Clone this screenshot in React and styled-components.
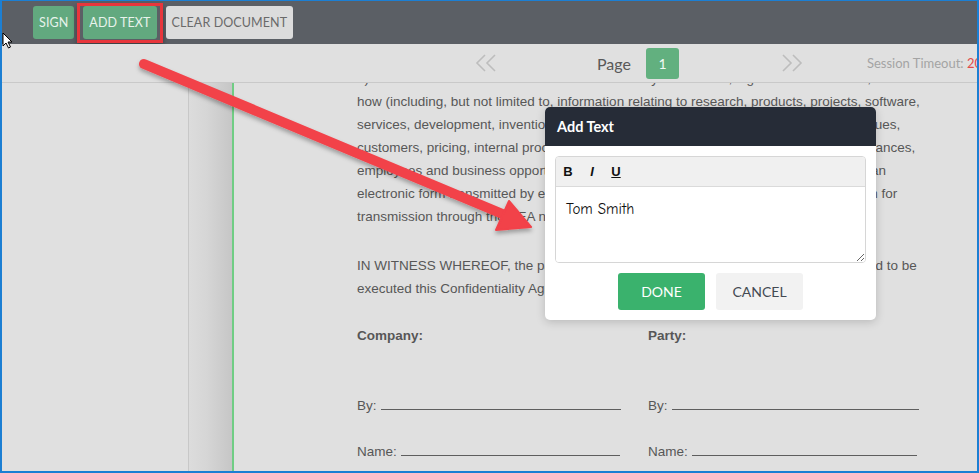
import styled, { createGlobalStyle } from "styled-components";

const GlobalStyle = createGlobalStyle`
  html, body {
    margin: 0;
    padding: 0;
    overflow: hidden;
    background: #ffffff;
  }
  * {
    box-sizing: border-box;
  }
`;

const Frame = styled.div`
  position: relative;
  width: 979px;
  height: 473px;
  overflow: hidden;
  display: flex;
  flex-direction: column;
  border: 2px solid #1c7fd3;
  border-top-width: 1px;
  background: #e0e0e0;
  font-family: Lato, "Open Sans", sans-serif;
`;

const Toolbar = styled.div`
  height: 43px;
  flex: none;
  display: flex;
  align-items: center;
  padding-left: 31px;
  background: #5b5f65;
`;

const ToolButton = styled.button`
  height: 33px;
  padding: 0 6px;
  border: none;
  border-radius: 3px;
  font-family: Lato, sans-serif;
  font-size: 12.5px;
  letter-spacing: 0.1px;
  text-transform: uppercase;
  background: ${(p) => (p.$light ? "#dcdcdc" : "#62a97f")};
  color: ${(p) => (p.$light ? "#6a6a6a" : "#e8f3ec")};
`;

const Highlight = styled.span`
  display: flex;
  margin: 1px 3px 0 3px;
  padding: 0 3px 1px;
  border: 3px solid #e8363c;
  box-shadow: 0 4px 6px rgba(0, 0, 0, 0.35);
`;

const NavBar = styled.div`
  height: 39px;
  flex: none;
  display: flex;
  align-items: center;
  border-bottom: 1px solid #c9c9c9;
  background: #e0e0e0;
  white-space: nowrap;
`;

const Chevrons = styled.svg`
  flex: none;
  margin-left: ${(p) => p.$offset}px;
`;

const PageLabel = styled.span`
  flex: none;
  margin-left: 100px;
  font-size: 16px;
  color: #595959;
`;

const PageBox = styled.span`
  flex: none;
  margin-left: 15px;
  width: 33px;
  height: 31px;
  border-radius: 3px;
  background: #62b07f;
  color: #f2faf5;
  font-size: 14px;
  display: flex;
  align-items: center;
  justify-content: center;
`;

const Timeout = styled.span`
  flex: none;
  margin-left: 64px;
  font-size: 13px;
  color: #a4a4a4;
`;

const TimeLeft = styled.span`
  color: #e24b4b;
`;

const Content = styled.div`
  flex: 1;
  min-height: 0;
  display: flex;
`;

const Sidebar = styled.div`
  width: 187px;
  flex: none;
  border-right: 1px solid #c8c8c8;
  background: #e0e0e0;
`;

const Gutter = styled.div`
  width: 45px;
  flex: none;
  background: linear-gradient(to right, #dcdcdc, #d6d6d6 40%, #c6c6c6);
  border-right: 2px solid #70cd84;
`;

const Sheet = styled.div`
  flex: 1;
  overflow: hidden;
  padding-left: 123px;
  background: #e0e0e0;
  font-family: "Liberation Sans", Arial, sans-serif;
  font-size: 13.5px;
  line-height: 23px;
  color: #575757;
`;

const Scroll = styled.div`
  margin-top: -16px;
`;

const Para = styled.p`
  margin: 0 0 ${(p) => p.$after}px;
  white-space: nowrap;
`;

const Line = styled.span`
  display: block;
`;

const SignGrid = styled.div`
  display: grid;
  grid-template-columns: 291px 290px;
  row-gap: ${(p) => p.$gap}px;
  margin-bottom: ${(p) => p.$after}px;
`;

const Heading = styled.span`
  font-weight: bold;
`;

const Field = styled.span`
  display: flex;
  align-items: baseline;
  gap: 4px;
`;

const Blank = styled.span`
  display: inline-block;
  width: ${(p) => p.$w}px;
  height: 11px;
  border-bottom: 1px solid #5e5e5e;
`;

const Modal = styled.div`
  position: absolute;
  left: 543px;
  top: 106px;
  width: 331px;
  border-radius: 5px;
  background: #ffffff;
  box-shadow: 0 2px 10px rgba(0, 0, 0, 0.18);
  overflow: hidden;
`;

const ModalHeader = styled.div`
  height: 39px;
  display: flex;
  align-items: center;
  padding-left: 12px;
  background: #262c37;
  color: #ffffff;
  font-weight: bold;
  font-size: 14.5px;
`;

const ModalBody = styled.div`
  padding: 10px 10px 10px;
`;

const Editor = styled.div`
  border: 1px solid #d6d6d6;
  border-radius: 4px;
  overflow: hidden;
`;

const EditorTools = styled.div`
  height: 30px;
  display: flex;
  align-items: center;
  gap: 12px;
  padding-left: 6px;
  background: #f0f0f0;
  border-bottom: 1px solid #dadada;
`;

const ToolGlyph = styled.span`
  width: 12px;
  text-align: center;
  font-family: "Liberation Sans", Arial, sans-serif;
  font-size: 13px;
  font-weight: bold;
  font-style: ${(p) => (p.$italic ? "italic" : "normal")};
  text-decoration: ${(p) => (p.$under ? "underline" : "none")};
  color: #111111;
`;

const TextBox = styled.textarea`
  display: block;
  width: 100%;
  height: 75px;
  margin: 0;
  padding: 13px 10px 8px;
  border: none;
  outline: none;
  resize: vertical;
  font-family: "Comic Sans MS", "Comic Neue", cursive;
  font-size: 15px;
  color: #111111;
  background: #ffffff;
`;

const Actions = styled.div`
  display: flex;
  justify-content: center;
  gap: 11px;
  margin-top: 10px;
`;

const ActionButton = styled.button`
  width: 87px;
  height: 37px;
  border: none;
  border-radius: 3px;
  font-family: Lato, sans-serif;
  font-size: 14px;
  background: ${(p) => (p.$primary ? "#3ab26d" : "#f2f2f2")};
  color: ${(p) => (p.$primary ? "#ffffff" : "#444a52")};
`;

const Overlay = styled.svg`
  position: absolute;
  left: 0;
  top: 0;
  pointer-events: none;
`;

function ChevronPair({ dir, offset }) {
  const pts =
    dir === "left"
      ? ["10,2 2,10 10,18", "20,2 12,10 20,18"]
      : ["2,2 10,10 2,18", "12,2 20,10 12,18"];
  return (
    <Chevrons $offset={offset} width="22" height="20" viewBox="0 0 22 20">
      {pts.map((p) => (
        <polyline key={p} points={p} fill="none" stroke="#bdbdbd" strokeWidth="1.6" />
      ))}
    </Chevrons>
  );
}

export default function App() {
  return (
    <>
      <GlobalStyle />
      <Frame>
        <Toolbar>
          <ToolButton>Sign</ToolButton>
          <Highlight>
            <ToolButton>Add Text</ToolButton>
          </Highlight>
          <ToolButton $light>Clear Document</ToolButton>
        </Toolbar>

        <NavBar>
          <ChevronPair dir="left" offset={473} />
          <PageLabel>Page</PageLabel>
          <PageBox>1</PageBox>
          <ChevronPair dir="right" offset={102} />
          <Timeout>
            Session Timeout: <TimeLeft>20:00</TimeLeft>
          </Timeout>
        </NavBar>

        <Content>
          <Sidebar />
          <Gutter />
          <Sheet>
            <Scroll>
              <Para $after={26}>
                <Line>2) Definition. “Confidential Information” means any information, legal or technical data, or know</Line>
                <Line>how (including, but not limited to, information relating to research, products, projects, software,</Line>
                <Line>services, development, inventions, processes, designs, engineering, marketing techniques,</Line>
                <Line>customers, pricing, internal procedures, business and marketing plans or strategies, finances,</Line>
                <Line>employees and business opportunities) disclosed by the Company either directly or in an</Line>
                <Line>electronic form transmitted by email or any other means, including an electronic system for</Line>
                <Line>transmission through the EEA network.</Line>
              </Para>
              <Para $after={24}>
                <Line>IN WITNESS WHEREOF, the parties hereto, intending to be legally bound, have caused to be</Line>
                <Line>executed this Confidentiality Agreement as of the date and year first written above.</Line>
              </Para>
              <SignGrid $gap={0} $after={47}>
                <Heading>Company:</Heading>
                <Heading>Party:</Heading>
              </SignGrid>
              <SignGrid $gap={23} $after={0}>
                <Field>
                  By: <Blank $w={240} />
                </Field>
                <Field>
                  By: <Blank $w={247} />
                </Field>
                <Field>
                  Name: <Blank $w={219} />
                </Field>
                <Field>
                  Name: <Blank $w={225} />
                </Field>
              </SignGrid>
            </Scroll>
          </Sheet>
        </Content>

        <Modal>
          <ModalHeader>Add Text</ModalHeader>
          <ModalBody>
            <Editor>
              <EditorTools>
                <ToolGlyph>B</ToolGlyph>
                <ToolGlyph $italic>I</ToolGlyph>
                <ToolGlyph $under>U</ToolGlyph>
              </EditorTools>
              <TextBox defaultValue="Tom Smith" />
            </Editor>
            <Actions>
              <ActionButton $primary>DONE</ActionButton>
              <ActionButton>CANCEL</ActionButton>
            </Actions>
          </ModalBody>
        </Modal>

        <Overlay width="979" height="473" viewBox="0 0 979 473">
          <defs>
            <filter id="arrowShadow" x="-10%" y="-10%" width="120%" height="130%">
              <feDropShadow dx="0" dy="3" stdDeviation="2" floodColor="#000" floodOpacity="0.3" />
            </filter>
          </defs>
          <g filter="url(#arrowShadow)" fill="#f2424a" stroke="#f2424a">
            <line x1="142" y1="63" x2="503" y2="214" strokeWidth="10" strokeLinecap="round" />
            <polygon points="529,226 494,229 507,200" strokeWidth="2" strokeLinejoin="round" />
          </g>
          <path
            d="M1 32 L1 45 L4 42 L6.5 47 L8.5 46 L6 41 L10 41 Z"
            fill="#ffffff"
            stroke="#000000"
            strokeWidth="1"
          />
        </Overlay>
      </Frame>
    </>
  );
}
